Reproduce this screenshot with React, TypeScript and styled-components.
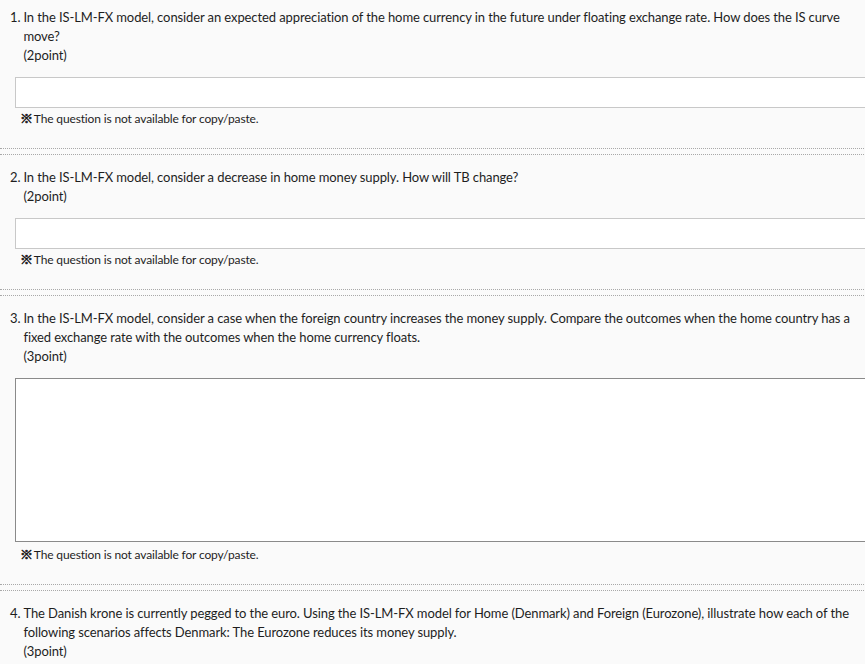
import React from "react";
import styled, { createGlobalStyle } from "styled-components";

const Global = createGlobalStyle`
  html, body {
    margin: 0;
    padding: 0;
    background: #fafafa;
    overflow: hidden;
  }
  * { box-sizing: border-box; }
`;

const Page = styled.div`
  width: 900px;
  font-family: Lato, "Noto Sans CJK KR", sans-serif;
  color: #1e1e1e;
  background: #fafafa;
`;

const Item = styled.section<{ $first?: boolean }>`
  padding: ${(p) => (p.$first ? "8px" : "13px")} 0 20px 10px;
`;

const Divider = styled.div`
  height: 7px;
  border-top: 1px dotted #a8a8a8;
  border-bottom: 1px dotted #a8a8a8;
`;

const Question = styled.div`
  display: flex;
  width: 855px;
  font-size: 13px;
  line-height: 19px;
  letter-spacing: -0.1px;
`;

const Num = styled.span`
  flex: none;
  margin-right: 3px;
`;

const Body = styled.div`
  flex: 1;
`;

const Answer = styled.input`
  display: block;
  margin: 12px 0 0 5px;
  width: 880px;
  height: 31px;
  border: 1px solid #c8c8c8;
  background: #fff;
  outline: none;
  padding: 0 8px;
  font-family: inherit;
`;

const LongAnswer = styled.textarea`
  display: block;
  margin: 12px 0 4px 5px;
  width: 880px;
  height: 164px;
  border: 1px solid #8a8a8a;
  background: #fff;
  outline: none;
  resize: none;
  font-family: inherit;
`;

const Note = styled.p`
  margin: 2px 0 0 10px;
  height: 18px;
  font-size: 12px;
  line-height: 18px;
  letter-spacing: -0.15px;
`;

const Mark = styled.span`
  font-family: "Noto Sans CJK KR", sans-serif;
  font-size: 13px;
  line-height: 1;
  -webkit-text-stroke: 0.6px currentColor;
  margin-right: 1px;
`;

type Q = { n: number; text: string; points: number; long?: boolean };

const questions: Q[] = [
  {
    n: 1,
    text: "In the IS-LM-FX model, consider an expected appreciation of the home currency in the future under floating exchange rate. How does the IS curve move?",
    points: 2,
  },
  {
    n: 2,
    text: "In the IS-LM-FX model, consider a decrease in home money supply. How will TB change?",
    points: 2,
  },
  {
    n: 3,
    text: "In the IS-LM-FX model, consider a case when the foreign country increases the money supply. Compare the outcomes when the home country has a fixed exchange rate with the outcomes when the home currency floats.",
    points: 3,
    long: true,
  },
  {
    n: 4,
    text: "The Danish krone is currently pegged to the euro. Using the IS-LM-FX model for Home (Denmark) and Foreign (Eurozone), illustrate how each of the following scenarios affects Denmark: The Eurozone reduces its money supply.",
    points: 3,
    long: true,
  },
];

export default function App() {
  return (
    <>
      <Global />
      <Page>
        {questions.map((q, i) => (
          <React.Fragment key={q.n}>
            {i > 0 && <Divider />}
            <Item $first={i === 0}>
              <Question>
                <Num>{q.n}.</Num>
                <Body>
                  {q.text}
                  <br />({q.points}point)
                </Body>
              </Question>
              {q.long ? <LongAnswer readOnly /> : <Answer type="text" readOnly />}
              <Note>
                <Mark>※</Mark>The question is not available for copy/paste.
              </Note>
            </Item>
          </React.Fragment>
        ))}
      </Page>
    </>
  );
}
